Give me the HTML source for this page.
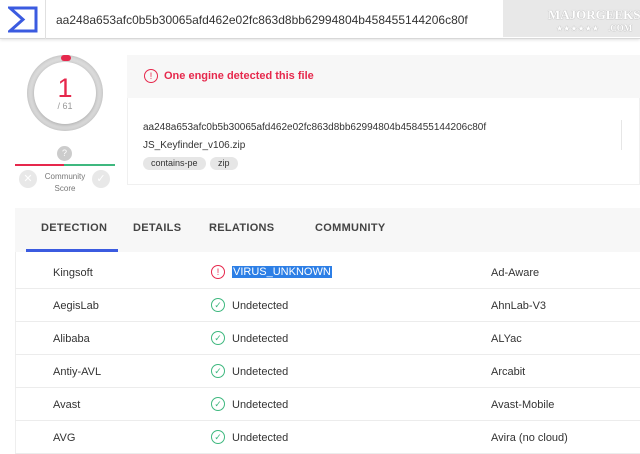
<!DOCTYPE html>
<html><head><style>
*{margin:0;padding:0;box-sizing:border-box}
body{width:640px;height:454px;overflow:hidden;background:#fff;font-family:"Liberation Sans",Arial,sans-serif;color:#333;position:relative}
.a{position:absolute}
.hdr{left:0;top:0;width:640px;height:39px;background:#fff;border-bottom:1px solid #d8d8d8;box-shadow:0 1px 3px rgba(0,0,0,.12)}
.t{font-size:11px;color:#333;white-space:nowrap}
.row{position:absolute;left:15px;width:625px;height:33px;border-bottom:1px solid #ececec}
.row span{position:absolute;top:11px;font-size:11px;color:#333;white-space:nowrap}
.tab{position:absolute;top:222px;font-size:11px;font-weight:bold;color:#444;letter-spacing:.3px}
.tag{position:absolute;top:157px;height:13px;border-radius:7px;background:#e6e6e6;font-size:9px;color:#333;line-height:13px;padding:0 8px}
</style></head><body>
<div class="a hdr"></div>
<div class="a" style="left:45px;top:0;width:1px;height:39px;background:#e0e0e0"></div>
<svg class="a" style="left:8px;top:6px" width="30" height="27" viewBox="0 0 30 27"><path d="M2 2H28V25H2L15 13.5Z" fill="none" stroke="#3b5be0" stroke-width="3" stroke-linejoin="miter"/></svg>
<div class="a t" style="left:56px;top:13px;font-size:12px">aa248a653afc0b5b30065afd462e02fc863d8bb62994804b458455144206c80f</div>
<div class="a" style="left:503px;top:0;width:137px;height:37px;background:#e8e8e8"></div>
<div class="a" style="left:548px;top:7px;font-family:'Liberation Serif',serif;font-weight:bold;font-size:13px;color:#fff;text-shadow:0 0 1px #888;white-space:nowrap">MAJORGEEKS</div>
<div class="a" style="left:556px;top:24px;font-size:8px;color:#fff;text-shadow:0 0 1px #888;white-space:nowrap">★★★★★★</div>
<div class="a" style="left:608px;top:23px;font-family:'Liberation Serif',serif;font-weight:bold;font-size:9px;color:#fff;text-shadow:0 0 1px #888">.COM</div>

<div class="a" style="left:27px;top:55px;width:76px;height:76px;border-radius:50%;background:#ddd;box-shadow:inset 0 0 4px rgba(0,0,0,.2)"></div>
<div class="a" style="left:34px;top:62px;width:62px;height:62px;border-radius:50%;background:#fff;box-shadow:0 1px 4px rgba(0,0,0,.25)"></div>
<div class="a" style="left:61px;top:55px;width:10px;height:6px;border-radius:3px;background:#e6284c"></div>
<div class="a" style="left:34px;top:73px;width:62px;text-align:center;font-size:27px;color:#e6284c">1</div>
<div class="a" style="left:34px;top:101px;width:62px;text-align:center;font-size:9px;color:#999">/ 61</div>
<div class="a" style="left:15px;top:164px;width:49px;height:2px;background:#e6284c"></div>
<div class="a" style="left:64px;top:164px;width:51px;height:2px;background:#3fb87f"></div>
<div class="a" style="left:57px;top:146px;width:15px;height:15px;border-radius:50%;background:#ccc;color:#fff;font-size:9px;text-align:center;line-height:15px">?</div>
<div class="a" style="left:19px;top:170px;width:18px;height:18px;border-radius:50%;background:#e8e8e8;color:#fff;font-size:11px;text-align:center;line-height:18px">✕</div>
<div class="a" style="left:92px;top:170px;width:18px;height:18px;border-radius:50%;background:#e8e8e8;color:#fff;font-size:11px;text-align:center;line-height:18px">✓</div>
<div class="a" style="left:40px;top:171px;width:50px;text-align:center;font-size:8px;color:#777;line-height:12px">Community<br>Score</div>

<div class="a" style="left:127px;top:55px;width:513px;height:43px;background:#f7f7f7"></div>
<div class="a" style="left:144px;top:69px;width:14px;height:14px;border-radius:50%;border:1.3px solid #e6284c;color:#e6284c;font-size:9px;text-align:center;line-height:12px">!</div>
<div class="a" style="left:164px;top:70px;font-size:11px;font-weight:bold;color:#e6284c">One engine detected this file</div>
<div class="a" style="left:127px;top:98px;width:513px;height:87px;border:1px solid #f0f0f0;border-top:0"></div>
<div class="a t" style="left:143px;top:122px;font-size:10px">aa248a653afc0b5b30065afd462e02fc863d8bb62994804b458455144206c80f</div>
<div class="a t" style="left:143px;top:140px;font-size:10px">JS_Keyfinder_v106.zip</div>
<div class="tag" style="left:143px">contains-pe</div>
<div class="tag" style="left:210px">zip</div>
<div class="a" style="left:621px;top:120px;width:1px;height:30px;background:#e6e6e6"></div>

<div class="a" style="left:15px;top:208px;width:625px;height:44px;background:#f7f7f7"></div>
<div class="tab" style="left:41px">DETECTION</div>
<div class="tab" style="left:133px">DETAILS</div>
<div class="tab" style="left:209px">RELATIONS</div>
<div class="tab" style="left:315px">COMMUNITY</div>
<div class="a" style="left:26px;top:249px;width:92px;height:3px;background:#3b5be0"></div>
<div class="a" style="left:15px;top:252px;width:1px;height:202px;background:#eee"></div>

<div class="row" style="top:256px"><span style="left:38px">Kingsoft</span><span style="left:196px;top:9px;width:14px;height:14px;border-radius:50%;border:1.3px solid #e6284c;color:#e6284c;font-size:9px;text-align:center;line-height:12px">!</span><span style="left:217px;top:10px;background:#2d7fe6;color:#fff;padding:0 1px">VIRUS_UNKNOWN</span><span style="left:476px">Ad-Aware</span></div>
<div class="row" style="top:289px"><span style="left:38px">AegisLab</span><span style="left:196px;top:9px;width:14px;height:14px;border-radius:50%;border:1.3px solid #3fb87f;color:#3fb87f;font-size:9px;text-align:center;line-height:12px">✓</span><span style="left:217px">Undetected</span><span style="left:476px">AhnLab-V3</span></div>
<div class="row" style="top:322px"><span style="left:38px">Alibaba</span><span style="left:196px;top:9px;width:14px;height:14px;border-radius:50%;border:1.3px solid #3fb87f;color:#3fb87f;font-size:9px;text-align:center;line-height:12px">✓</span><span style="left:217px">Undetected</span><span style="left:476px">ALYac</span></div>
<div class="row" style="top:355px"><span style="left:38px">Antiy-AVL</span><span style="left:196px;top:9px;width:14px;height:14px;border-radius:50%;border:1.3px solid #3fb87f;color:#3fb87f;font-size:9px;text-align:center;line-height:12px">✓</span><span style="left:217px">Undetected</span><span style="left:476px">Arcabit</span></div>
<div class="row" style="top:388px"><span style="left:38px">Avast</span><span style="left:196px;top:9px;width:14px;height:14px;border-radius:50%;border:1.3px solid #3fb87f;color:#3fb87f;font-size:9px;text-align:center;line-height:12px">✓</span><span style="left:217px">Undetected</span><span style="left:476px">Avast-Mobile</span></div>
<div class="row" style="top:421px"><span style="left:38px">AVG</span><span style="left:196px;top:9px;width:14px;height:14px;border-radius:50%;border:1.3px solid #3fb87f;color:#3fb87f;font-size:9px;text-align:center;line-height:12px">✓</span><span style="left:217px">Undetected</span><span style="left:476px">Avira (no cloud)</span></div>
</body></html>
